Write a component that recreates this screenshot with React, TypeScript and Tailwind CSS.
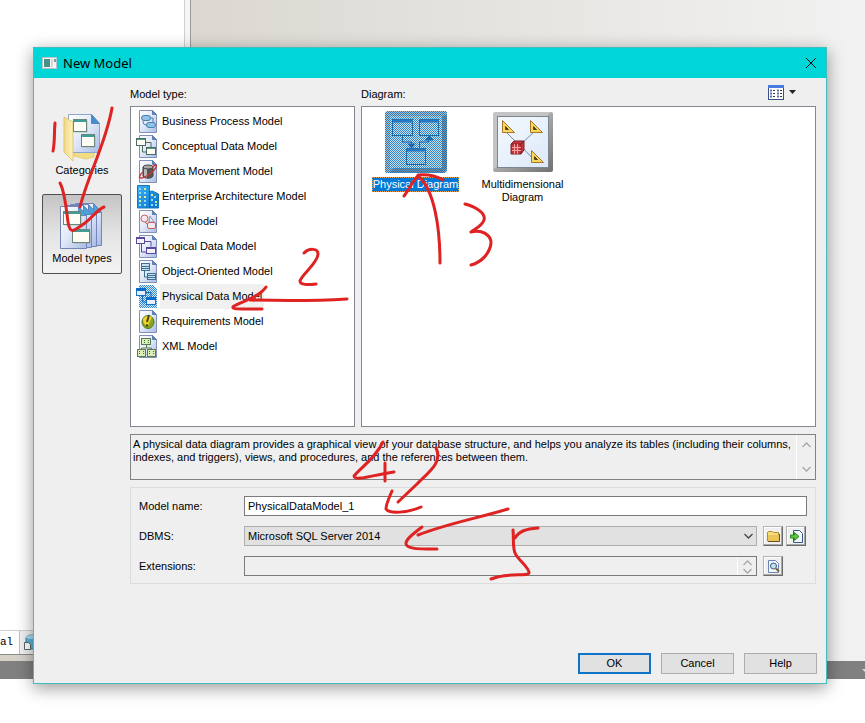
import React, { useState } from "react";

type Kind =
  | "process"
  | "conceptual"
  | "movement"
  | "enterprise"
  | "free"
  | "logical"
  | "object"
  | "physical"
  | "requirements"
  | "xml";

const MODEL_TYPES: { kind: Kind; label: string }[] = [
  { kind: "process", label: "Business Process Model" },
  { kind: "conceptual", label: "Conceptual Data Model" },
  { kind: "movement", label: "Data Movement Model" },
  { kind: "enterprise", label: "Enterprise Architecture Model" },
  { kind: "free", label: "Free Model" },
  { kind: "logical", label: "Logical Data Model" },
  { kind: "object", label: "Object-Oriented Model" },
  { kind: "physical", label: "Physical Data Model" },
  { kind: "requirements", label: "Requirements Model" },
  { kind: "xml", label: "XML Model" },
];

// Gradients and dither patterns shared by all icons
function IconDefs() {
  return (
    <svg className="absolute h-0 w-0" aria-hidden="true">
      <defs>
        <linearGradient id="doc" x1="0" y1="0" x2="1" y2="1">
          <stop offset="0" stopColor="#ffffff" />
          <stop offset="0.5" stopColor="#e0e8f8" />
          <stop offset="1" stopColor="#a8bbe6" />
        </linearGradient>
        <linearGradient id="folder" x1="0" y1="0" x2="1" y2="0">
          <stop offset="0" stopColor="#f0d884" />
          <stop offset="1" stopColor="#fdf3c0" />
        </linearGradient>
        <linearGradient id="building" x1="0" y1="0" x2="1" y2="1">
          <stop offset="0" stopColor="#38b0f4" />
          <stop offset="1" stopColor="#0b72c8" />
        </linearGradient>
        <linearGradient id="frame" x1="0" y1="0" x2="1" y2="1">
          <stop offset="0" stopColor="#d8d8d8" />
          <stop offset="0.5" stopColor="#a8a8a8" />
          <stop offset="1" stopColor="#707070" />
        </linearGradient>
        <linearGradient id="pane" x1="0" y1="0" x2="1" y2="1">
          <stop offset="0" stopColor="#f4f9ff" />
          <stop offset="1" stopColor="#dce9f8" />
        </linearGradient>
        <pattern id="dither" width="2" height="2" patternUnits="userSpaceOnUse">
          <rect width="1" height="1" fill="#0f74c4" />
          <rect x="1" y="1" width="1" height="1" fill="#0f74c4" />
        </pattern>
      </defs>
    </svg>
  );
}

function DocSheet() {
  return (
    <>
      <path d="M3.500.5h13l4 4v18h-17z" fill="url(#doc)" stroke="#8191b5" />
      <path d="M16.500.5v4h4z" fill="#5b86c8" stroke="#5f7db4" />
    </>
  );
}

function ModelIcon({ kind }: { kind: Kind }) {
  return (
    <svg viewBox="0 0 24 24" className="h-6 w-6 shrink-0" aria-hidden="true">
      {kind !== "enterprise" && <DocSheet />}
      {kind === "process" && (
        <g fill="#8fc3ea" stroke="#4a7fae">
          <rect x="5.500" y="5.500" width="9" height="5" rx="2.500" />
          <rect x="10.500" y="12.500" width="9" height="5" rx="2.500" />
          <path d="M14 8h3v4M7 11c0 3 1 4 4 4" fill="none" />
        </g>
      )}
      {kind === "conceptual" && (
        <g fill="#fdfdf4" stroke="#4b6b62">
          <path d="M6.500 10v7h4" fill="none" />
          <rect x=".5" y="3.500" width="9" height="7" />
          <rect x="10.500" y="12.500" width="9" height="7" />
          <path d="M1 4.500h8M11 13.500h8" stroke="#4f9a86" />
          <path d="M10 7.500h5v5" fill="none" />
        </g>
      )}
      {kind === "movement" && (
        <g>
          <path d="M7 7v9c1 3 9 3 10 0V7" fill="#555" stroke="#444" />
          <path d="M8 8v8c1 1 2 1 3 2V8z" fill="#b8b8b8" />
          <ellipse cx="12" cy="7" rx="5" ry="2" fill="#aaa" stroke="#444" />
          <path d="M16 7c4-3 6-2 3 2-3 4-10 9-14 9-3 0-1-4 2-6" fill="none" stroke="#c63636" strokeWidth="1.500" />
        </g>
      )}
      {kind === "enterprise" && (
        <g>
          <path d="M1.500.5h12v6l3-.5 6 3v14h-21z" fill="url(#building)" stroke="#1579be" />
          <path d="M13.500 6v17" stroke="#0d66a8" />
          <path d="M3 4h2m3 0h2M3 8h2m3 0h2M3 12h2m3 0h2M3 16h2m3 0h2M3 20h2m3 0h2" stroke="#8fdcff" strokeWidth="2" />
          <path d="M8 4h2M3 12h2m3 0h2m5-2h2m2 7h2M3 16h2" stroke="#e5e88c" strokeWidth="2" />
          <path d="M18 12h2m-5 3h2m-2 5h2m2 0h2" stroke="#8fdcff" strokeWidth="2" />
        </g>
      )}
      {kind === "free" && (
        <g fill="#fbe9ec" stroke="#c25a66">
          <circle cx="8.500" cy="8.500" r="3.500" />
          <path d="M14 6l4 6h-5z" fill="#e8edf5" stroke="#8f9ab0" />
          <path d="M9 12l4 4" />
          <rect x="11.500" y="12.500" width="8" height="6" rx="1.500" />
        </g>
      )}
      {kind === "logical" && (
        <g fill="#f4f2ff" stroke="#5b479d">
          <path d="M5.500 9v8h6" fill="none" />
          <rect x=".5" y="2.500" width="8" height="6" />
          <rect x="10.500" y="12.500" width="9" height="6" />
          <path d="M1 3.500h7M11 13.500h8M9 6.500h6v5" fill="none" />
        </g>
      )}
      {kind === "object" && (
        <g fill="#c4e0ee" stroke="#3d6f92">
          <path d="M8.500 11v6h3" fill="none" />
          <rect x="5.500" y="3.500" width="8" height="7" />
          <rect x="11.500" y="13.500" width="8" height="6" />
          <path d="M6 6.500h7M6 8.500h7M12 15.500h7M12 17.500h7" />
        </g>
      )}
      {kind === "physical" && (
        <g>
          <path d="M3 0h15l3 4v19H3z" fill="#d4e8fa" />
          <path d="M3 0h15l3 4v19H3V11H0V3h3z" fill="url(#dither)" opacity="0.8" shapeRendering="crispEdges" />
          <path d="M6.500 10v7h4M10 7.500h5v5" fill="none" stroke="#1468b4" />
          <rect x=".5" y="3.500" width="9" height="7" fill="#e4f1fd" stroke="#1a70c4" />
          <rect x="10.500" y="12.500" width="9" height="7" fill="#e4f1fd" stroke="#1a70c4" />
          <path d="M0 4.500h10M10 13.500h10" stroke="#0a6cc8" strokeWidth="3" />
        </g>
      )}
      {kind === "requirements" && (
        <g>
          <ellipse cx="12" cy="12" rx="6" ry="6.500" fill="#8aa51f" stroke="#55751e" />
          <path d="M7 9c3-4 6-4 9-2l-4 9c-3 0-5-3-5-7z" fill="#f0d22b" />
          <path d="M13 5l-2 7" stroke="#3c4a1c" strokeWidth="2" />
          <circle cx="11" cy="15.500" r="1.200" fill="#3c4a1c" />
        </g>
      )}
      {kind === "xml" && (
        <g fill="#dbeeb8" stroke="#5a7a52">
          <path d="M10.500 10v3M5.500 15v-2h10v2" fill="none" />
          <rect x="5.500" y="3.500" width="9" height="6" />
          <rect x="1.500" y="14.500" width="8" height="7" />
          <rect x="11.500" y="14.500" width="8" height="7" />
          <path d="M8.500 5v3m4-3v3M3.500 16v4m4-4v4M13.500 16v4m4-4v4" stroke="#2f7a3b" strokeDasharray="1 1" />
        </g>
      )}
    </svg>
  );
}

function MiniWindow({ x, y, w = 15, h = 13 }: { x: number; y: number; w?: number; h?: number }) {
  return (
    <g>
      <rect x={x + 1.5} y={y + 1.5} width={w} height={h} fill="#8d9a8e" opacity="0.5" />
      <rect x={x + 0.5} y={y + 0.5} width={w} height={h} fill="#fdfdf6" stroke="#68887b" />
      <rect x={x + 1} y={y + 1} width={w - 1} height="2" fill="#3f9c96" />
    </g>
  );
}

function CategoriesIcon() {
  return (
    <svg viewBox="0 0 44 48" className="h-12 w-11" aria-hidden="true">
      <path d="M14 34l20 2v7l-8 2-12-3z" fill="#f2dc82" stroke="#e4cd78" />
      <path d="M8.500.5h23l8 9v29h-31z" fill="url(#doc)" stroke="#8ea4d0" />
      <path d="M31.500.5v9h8z" fill="#3f8fce" stroke="#5b86c0" />
      <path d="M4 3l9 5v39l-9-9z" fill="url(#folder)" stroke="#e0c777" />
      <MiniWindow x={13} y={5} w={13} h={12} />
      <MiniWindow x={21} y={20} w={13} h={12} />
    </svg>
  );
}

function ModelTypesIcon() {
  return (
    <svg viewBox="0 0 44 48" className="h-12 w-11" aria-hidden="true">
      {[15, 10, 5, 0].map((o) => (
        <g key={o} transform={`translate(${o} ${-o / 5})`}>
          <path d="M.5 4.500h18l8 9v33H.5z" fill="url(#doc)" stroke="#7484b8" />
          <path d="M18.500 4.500v9h8z" fill="#4aa4dc" stroke="#5b86c0" />
        </g>
      ))}
      <MiniWindow x={3} y={9} w={17} h={13} />
      <MiniWindow x={12} y={27} w={17} h={13} />
    </svg>
  );
}

function PhysicalDiagramIcon() {
  return (
    <svg viewBox="0 0 62 62" className="h-[62px] w-[62px]" aria-hidden="true">
      <rect width="62" height="62" rx="3" fill="#b4bcc2" />
      <path d="M5 5h52v52H5z" fill="#cfdfec" />
      <path d="M62 4v54l-4 4H4l5-5h48V5z" fill="#7d8890" />
      <g fill="#cfdfec" stroke="#2560a0">
        <rect x="7.500" y="8.500" width="20" height="16" />
        <rect x="34.500" y="8.500" width="19" height="16" />
        <rect x="21.500" y="37.500" width="19" height="16" />
        <path d="M17.500 25v6h9v6M34.500 37v-6h9v-6" fill="none" />
        <path d="M23 33l3.500 4 3.500-4zM40 29l4-4 4 4z" fill="#2560a0" />
      </g>
      <path d="M8 10h20M35 10h19M22 39h19" stroke="#3a7ab8" strokeWidth="3" />
      <rect width="62" height="62" rx="3" fill="url(#dither)" opacity="0.85" shapeRendering="crispEdges" />
    </svg>
  );
}

function Square({ x, y }: { x: number; y: number }) {
  return (
    <g transform={`translate(${x} ${y})`}>
      <path d="M.5.5v12h12z" fill="#fbd65d" stroke="#a8752c" />
      <path d="M3.500 6.500v3h3z" fill="#4a3b1b" stroke="#5b4620" />
    </g>
  );
}

function MultidimensionalIcon() {
  return (
    <svg viewBox="0 0 62 62" className="h-[62px] w-[62px]" aria-hidden="true">
      <rect x="1" y="1" width="60" height="60" rx="2" fill="url(#frame)" />
      <path d="M1 3l2-2h56l-4 4H5v50l-4 4z" fill="#c4c4c4" />
      <rect x="5.500" y="5.500" width="51" height="51" fill="url(#pane)" stroke="#7d858e" />
      <path d="M13 20l12 12M43 20L27 35M29 35l13 14" stroke="#7a8ca4" />
      <Square x={10} y={9} />
      <Square x={38} y={9} />
      <Square x={39} y={39} />
      <path d="M19 33l3-3h10v9l-3 4H19z" fill="#c9363e" stroke="#7d1e25" />
      <path d="M29 33v10M19 33h10l3-3" fill="none" stroke="#7d1e25" />
      <path d="M20 36.500h9M20 39.500h9M22.500 33v10M25.500 33v10" stroke="#f3a0a0" />
    </svg>
  );
}

function Chevron({ up, className }: { up?: boolean; className?: string }) {
  return (
    <svg viewBox="0 0 9 6" className={`h-[6px] w-[9px] ${className ?? ""}`} fill="none" stroke="currentColor" strokeWidth="1.250" aria-hidden="true">
      <path d={up ? "M.5 5l4-4 4 4" : "M.5 1l4 4 4-4"} />
    </svg>
  );
}

function ToolButton({ label, children }: { label: string; children: React.ReactNode }) {
  return (
    <button
      type="button"
      aria-label={label}
      className="flex h-5 w-5 items-center justify-center border border-t-[#b5b5b5] border-r-[#6b6b6b] border-b-[#6b6b6b] border-l-[#b5b5b5] bg-[#f0f0f0] shadow-[inset_-1px_-1px_#a8a8a8,inset_1px_1px_#fff]"
    >
      {children}
    </button>
  );
}

function Backdrop() {
  return (
    <div className="absolute inset-0 flex flex-col bg-white">
      <div className="flex h-[661px]">
        <div className="flex w-[184px] flex-col">
          <div className="flex-1" />
          <div className="flex h-[25px] items-center border-t border-b border-t-[#d0d0d0] border-b-[#8c8c8c] bg-[#f0f0f0]">
            <span className="flex h-full w-5 items-center border-r border-[#c0c0c0] bg-white font-['Liberation_Mono',monospace] text-[11px] text-black">al</span>
            <svg viewBox="0 0 16 18" className="ml-1 h-[18px] w-4" aria-hidden="true">
              <path d="M2 4c0-4 12-4 12 0v11H2z" fill="#5fb3d6" stroke="#3b86ad" />
              <ellipse cx="8" cy="3" rx="6" ry="2" fill="#a8dcf0" />
              <path d="M.5 8.500h4l2 2v5h-6z" fill="#fff" stroke="#556666" />
            </svg>
          </div>
          <div className="h-[6px] bg-[#d6d2ca]" />
        </div>
        <div className="w-[7px] border-r border-l border-r-[#9c9c9c] border-l-[#cfcfcf] bg-[#f6f6f6]" />
        <div className="flex-1 bg-linear-to-r from-[#dbd8d1] to-[#f2f2f2]" />
      </div>
      <div className="flex h-[18px] items-center justify-end bg-[#808080]">
        <svg viewBox="0 0 3 4" className="h-1 w-[3px]" aria-hidden="true">
          <path d="M0 1h3v3z" fill="#ddd" />
        </svg>
      </div>
    </div>
  );
}

// Hand-drawn step markers 1 to 5 over the dialog
function StepMarks() {
  return (
    <svg
      viewBox="0 0 865 723"
      className="pointer-events-none absolute top-0 left-0 h-[723px] w-[865px]"
      fill="none"
      stroke="#df2222"
      strokeWidth="3"
      strokeLinecap="round"
      strokeLinejoin="round"
      aria-hidden="true"
    >
      <path d="M55 123C54 133 55 142 53 151" />
      <path d="M112 108C106 143 88 175 80 207" />
      <path d="M60 183C65 192 66 208 68 222C70 235 74 231 85 223C93 217 97 210 104 207" />
      <path d="M304 253C309 248 318 248 318 254C318 263 302 274 300 281C300 285 308 285 316 284" />
      <path d="M347 299C315 301 285 301 250 300" />
      <path d="M266 287C261 295 247 300 234 306C230 309 238 309 243 309L262 309" />
      <path d="M440 263C440 230 435 190 418 176C412 181 409 190 404 196" />
      <path d="M418 175C428 174 436 176 443 180" />
      <path d="M465 204C477 207 486 214 484 220C482 226 475 229 471 232C482 229 491 235 491 243C490 253 482 262 471 265" />
      <path d="M383 442C374 460 361 467 354 476C354 482 377 474 394 472" />
      <path d="M385 463L385 481" />
      <path d="M436 448C444 463 425 475 417 484L398 502" />
      <path d="M392 491C389 498 386 504 386 509C389 514 408 513 421 507" />
      <path d="M508 509C478 518 446 524 418 535" />
      <path d="M422 527C413 534 400 543 409 547C416 550 427 549 437 549" />
      <path d="M538 528C526 529 519 531 515 538" />
      <path d="M513 530C514 539 512 549 516 555C520 561 530 569 529 573C527 577 508 572 491 579" />
    </svg>
  );
}

export default function App() {
  const [modelType, setModelType] = useState<Kind>("physical");
  const [modelName, setModelName] = useState("PhysicalDataModel_1");

  return (
    <div className="relative min-h-screen overflow-hidden pt-[47px] pr-[38px] pb-[39px] pl-[33px] font-['Liberation_Sans',Arial,sans-serif] text-[11px] leading-[13px] text-black">
      <IconDefs />
      <Backdrop />

      <main className="relative border border-[#40bdbd] bg-[#efefef] shadow-[0_4px_16px_rgba(0,0,0,0.4)]">
        <header className="flex h-[30px] items-center bg-[#00d6d8] pr-[9px] pl-2">
          <svg viewBox="0 0 15 12" className="h-3 w-[15px]" aria-hidden="true">
            <rect x=".5" y=".5" width="14" height="11" fill="#f6f6f6" stroke="#b9c4c4" />
            <rect x="2" y="2" width="6" height="8" fill="#4b8f86" />
            <rect x="9" y="2" width="2" height="8" fill="#d6d6d6" />
            <rect x="12" y="2" width="2" height="3" fill="#6a9ea0" />
          </svg>
          <h1 className="ml-[6px] flex-1 font-['Noto_Sans',sans-serif] text-[13px]">New Model</h1>
          <button type="button" aria-label="Close">
            <svg viewBox="0 0 12 12" className="h-3 w-3" stroke="#111" aria-hidden="true">
              <path d="M1 1l10 10M11 1L1 11" />
            </svg>
          </button>
        </header>

        <div className="flex gap-2 pr-[10px] pl-2">
          <nav className="flex w-20 shrink-0 flex-col gap-2 pt-7">
            <button type="button" className="flex h-20 flex-col items-center justify-end gap-[2px] pb-[9px]">
              <CategoriesIcon />
              Categories
            </button>
            <button
              type="button"
              className="flex h-20 flex-col items-center justify-end gap-[2px] rounded-xs border border-[#505050] bg-linear-to-b from-[#c4c4c4] via-[#e4e4e4] to-[#f4f4f4] pb-2"
            >
              <ModelTypesIcon />
              Model types
            </button>
          </nav>

          <div className="min-w-0 flex-1">
            <div className="flex gap-[6px]">
              <section className="w-[225px] shrink-0">
                <h2 className="flex h-7 items-center pt-1">Model type:</h2>
                <ul className="h-[321px] border border-[#828790] bg-white pt-[2px] pl-[5px]">
                  {MODEL_TYPES.map((m) => (
                    <li key={m.kind}>
                      <button type="button" onClick={() => setModelType(m.kind)} className="flex h-[25px] items-center">
                        <ModelIcon kind={m.kind} />
                        <span className={`flex h-full items-center px-[2px] ${m.kind === modelType ? "bg-[#f0f0f0]" : ""}`}>
                          {m.label}
                        </span>
                      </button>
                    </li>
                  ))}
                </ul>
              </section>

              <section className="min-w-0 flex-1">
                <div className="flex h-7 items-center justify-between pr-5">
                  <h2 className="pt-1">Diagram:</h2>
                  <button type="button" aria-label="View" className="flex items-center gap-[5px]">
                    <svg viewBox="0 0 16 15" className="h-[15px] w-4" aria-hidden="true">
                      <rect x=".5" y=".5" width="15" height="14" fill="#fff" stroke="#3c5080" />
                      <rect width="16" height="3" fill="#4a7be0" />
                      <path d="M2 5.500h2m5 0h2M2 8.500h2m5 0h2M2 11.500h2m5 0h2" stroke="#5a74b8" strokeWidth="2" />
                      <path d="M5 5.500h2m5 0h2M5 8.500h2m5 0h2M5 11.500h2m5 0h2" stroke="#333" />
                    </svg>
                    <svg viewBox="0 0 7 4" className="h-1 w-[7px]" aria-hidden="true">
                      <path d="M0 0h7L3.500 4z" fill="#222" />
                    </svg>
                  </button>
                </div>
                <div className="flex h-[321px] items-start border border-[#828790] bg-white pt-1">
                  <button type="button" className="flex w-[107px] flex-col items-center gap-1">
                    <PhysicalDiagramIcon />
                    <span className="border border-dotted border-[#e8a050] bg-[#0078d7] text-white">Physical Diagram</span>
                  </button>
                  <button type="button" className="flex w-[107px] flex-col items-center gap-[5px] px-3">
                    <MultidimensionalIcon />
                    <span>Multidimensional Diagram</span>
                  </button>
                </div>
              </section>
            </div>

            <div className="mt-[7px] flex h-[46px] border border-[#828282]">
              <p className="flex-1 pt-[3px] pl-[2px]">
                A physical data diagram provides a graphical view of your database structure, and helps you analyze its tables
                (including their columns, indexes, and triggers), views, and procedures, and the references between them.
              </p>
              <div className="flex w-[19px] flex-col items-center justify-between border-l border-white py-[7px] text-[#a8a8a8]">
                <button type="button" aria-label="Scroll up"><Chevron up /></button>
                <button type="button" aria-label="Scroll down"><Chevron /></button>
              </div>
            </div>

            <form className="mt-[7px] flex flex-col gap-[10px] border border-[#dcdcdc] px-2 pt-2 pb-[7px]">
              <div className="flex h-5 items-center">
                <label htmlFor="model-name" className="w-[105px] shrink-0">Model name:</label>
                <input
                  id="model-name"
                  value={modelName}
                  onChange={(e) => setModelName(e.target.value)}
                  className="h-5 min-w-0 flex-1 border border-[#7a7a7a] bg-white px-[3px] outline-none"
                />
              </div>
              <div className="flex h-5 items-center">
                <label htmlFor="dbms" className="w-[105px] shrink-0">DBMS:</label>
                <div className="relative min-w-0 flex-1">
                  <select id="dbms" className="block h-5 w-full appearance-none border border-[#adadad] bg-[#e1e1e1] px-[3px] outline-none">
                    <option>Microsoft SQL Server 2014</option>
                  </select>
                  <Chevron className="pointer-events-none absolute top-[7px] right-1 text-[#444]" />
                </div>
                <div className="ml-[6px] flex w-11 gap-[3px]">
                  <ToolButton label="Browse DBMS">
                    <svg viewBox="0 0 13 11" className="h-[11px] w-[13px]" aria-hidden="true">
                      <path d="M.5 1.500l1-1h4l1 1h5v8.500H.5z" fill="#f6dc7c" stroke="#b08930" />
                      <path d="M1 4h11v6H1z" fill="#edc458" />
                      <path d="M1 10.500h11.500V3" stroke="#6a5220" fill="none" />
                    </svg>
                  </ToolButton>
                  <ToolButton label="Import DBMS">
                    <svg viewBox="0 0 13 13" className="h-[13px] w-[13px]" aria-hidden="true">
                      <path d="M3.500.5h6l3 3v9h-9z" fill="#f2f6ff" stroke="#35588c" />
                      <path d="M.5 5h4V2.500L9 6.500l-4.500 4V8h-4z" fill="#5cc83a" stroke="#2b8a22" />
                    </svg>
                  </ToolButton>
                </div>
              </div>
              <div className="flex h-5 items-center">
                <label htmlFor="extensions" className="w-[105px] shrink-0">Extensions:</label>
                <div className="flex h-5 min-w-0 flex-1 border border-[#7a7a7a]">
                  <input id="extensions" readOnly className="min-w-0 flex-1 bg-transparent px-[3px] outline-none" />
                  <div className="flex w-[19px] flex-col items-center justify-end gap-[2px] border-l border-white pb-px text-[#a8a8a8]">
                    <Chevron up />
                    <Chevron />
                  </div>
                </div>
                <div className="ml-[6px] flex w-11">
                  <ToolButton label="Select extensions">
                    <svg viewBox="0 0 13 13" className="h-[13px] w-[13px]" aria-hidden="true">
                      <path d="M1.500.5h7l3 3v9h-10z" fill="#f2f6ff" stroke="#6b83b4" />
                      <circle cx="6.500" cy="6" r="3" fill="#bfe0f4" stroke="#44566e" />
                      <path d="M9 8.500l3 3" stroke="#7a6430" strokeWidth="2" />
                    </svg>
                  </ToolButton>
                </div>
              </div>
            </form>
          </div>
        </div>

        <footer className="flex justify-end gap-[10px] pt-[69px] pr-[9px] pb-[9px]">
          <button type="button" className="h-[21px] w-[73px] border-2 border-[#0f74c8] bg-[#e1e1e1]">OK</button>
          <button type="button" className="h-[21px] w-[73px] border border-[#adadad] bg-[#e1e1e1]">Cancel</button>
          <button type="button" className="h-[21px] w-[73px] border border-[#adadad] bg-[#e1e1e1]">Help</button>
        </footer>
      </main>

      <StepMarks />
    </div>
  );
}
